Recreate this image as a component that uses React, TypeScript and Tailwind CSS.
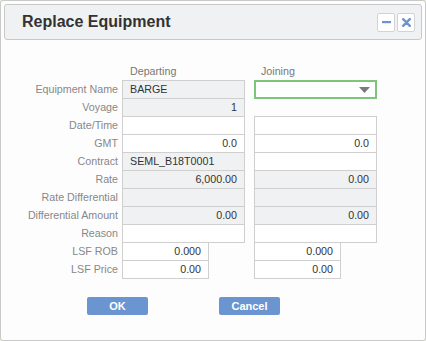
import React from 'react';

type Cell = { value?: string; gray?: boolean; align?: 'left' | 'right'; none?: boolean; select?: boolean };
type Row = { label: string; dep: Cell; join: Cell; narrow?: boolean };

const rows: Row[] = [
  { label: 'Equipment Name', dep: { value: 'BARGE', gray: true, align: 'left' }, join: { select: true } },
  { label: 'Voyage', dep: { value: '1', gray: true }, join: { none: true } },
  { label: 'Date/Time', dep: {}, join: {} },
  { label: 'GMT', dep: { value: '0.0' }, join: { value: '0.0' } },
  { label: 'Contract', dep: { value: 'SEML_B18T0001', gray: true, align: 'left' }, join: {} },
  { label: 'Rate', dep: { value: '6,000.00', gray: true }, join: { value: '0.00', gray: true } },
  { label: 'Rate Differential', dep: { gray: true }, join: { gray: true } },
  { label: 'Differential Amount', dep: { value: '0.00', gray: true }, join: { value: '0.00', gray: true } },
  { label: 'Reason', dep: {}, join: {} },
  { label: 'LSF ROB', dep: { value: '0.000' }, join: { value: '0.000' }, narrow: true },
  { label: 'LSF Price', dep: { value: '0.00' }, join: { value: '0.00' }, narrow: true },
];

const Field: React.FC<{ cell: Cell; narrow?: boolean }> = ({ cell, narrow }) => {
  const w = narrow ? 'w-[87px]' : 'w-[123px]';
  if (cell.none) return <div className={`${w} h-[19px]`} />;
  if (cell.select) {
    return (
      <div className={`${w} h-[19px] border-2 border-[#7dc57a] bg-white flex items-center justify-end pr-[5px]`}>
        <svg width="11" height="6" viewBox="0 0 11 6">
          <path d="M0 0 L11 0 L5.5 6 Z" fill="#7a7a7a" />
        </svg>
      </div>
    );
  }
  return (
    <div
      className={`${w} h-[19px] border border-[#cfcfcf] flex items-center px-[7px] text-[#333] ${
        cell.gray ? 'bg-[#f0f1f3]' : 'bg-white'
      } ${cell.align === 'left' ? 'justify-start' : 'justify-end'}`}
    >
      {cell.value}
    </div>
  );
};

export default function App() {
  return (
    <div
      className="w-[426px] h-[341px] bg-[#e9ecdc]"
      style={{ fontFamily: '"Liberation Sans", Arial, sans-serif' }}
    >
      <div className="w-full h-full bg-[#fdfdfd] border border-[#c9c9c9] rounded-[3px] pt-[3px] px-[3px]">
        <div className="h-[36px] bg-[#f0f1f3] border border-[#c8c8c8] rounded-[3px] flex items-center pl-[17px] pr-[6px]">
          <span className="text-[16px] font-bold text-[#333] flex-1">Replace Equipment</span>
          <div className="flex gap-[2px]">
            <button className="w-[18px] h-[19px] bg-white border border-[#d3d3d3] rounded-[2px] flex items-center justify-center">
              <svg width="9" height="3" viewBox="0 0 9 3">
                <rect x="0" y="0" width="9" height="2.2" fill="#6f93cc" />
              </svg>
            </button>
            <button className="w-[18px] h-[19px] bg-white border border-[#d3d3d3] rounded-[2px] flex items-center justify-center">
              <svg width="9" height="9" viewBox="0 0 9 9">
                <path d="M1.2 1.2 L7.8 7.8 M7.8 1.2 L1.2 7.8" stroke="#6f93cc" strokeWidth="2.4" strokeLinecap="round" />
              </svg>
            </button>
          </div>
        </div>

        <div className="mt-[22px] text-[10.7px]">
          <div className="flex h-[18px] items-center">
            <div className="w-[114px]" />
            <div className="ml-[4px] w-[123px] pl-[8px] text-[#777]">Departing</div>
            <div className="ml-[9px] w-[123px] pl-[7px] text-[#777]">Joining</div>
          </div>
          {rows.map((r, i) => (
            <div key={r.label} className={`flex items-center h-[19px] ${i > 0 ? '-mt-px' : ''}`}>
              <div className="w-[114px] text-right text-[#888]">{r.label}</div>
              <div className="ml-[4px] w-[123px]">
                <Field cell={r.dep} narrow={r.narrow} />
              </div>
              <div className="ml-[9px] w-[123px]">
                <Field cell={r.join} narrow={r.narrow} />
              </div>
            </div>
          ))}
          <div className="flex mt-[18px]">
            <button className="ml-[83px] w-[61px] h-[18px] bg-[#6a95d0] rounded-[2px] text-white font-bold text-[11px]">
              OK
            </button>
            <button className="ml-[71px] w-[61px] h-[18px] bg-[#6a95d0] rounded-[2px] text-white font-bold text-[11px]">
              Cancel
            </button>
          </div>
        </div>
      </div>
    </div>
  );
}
